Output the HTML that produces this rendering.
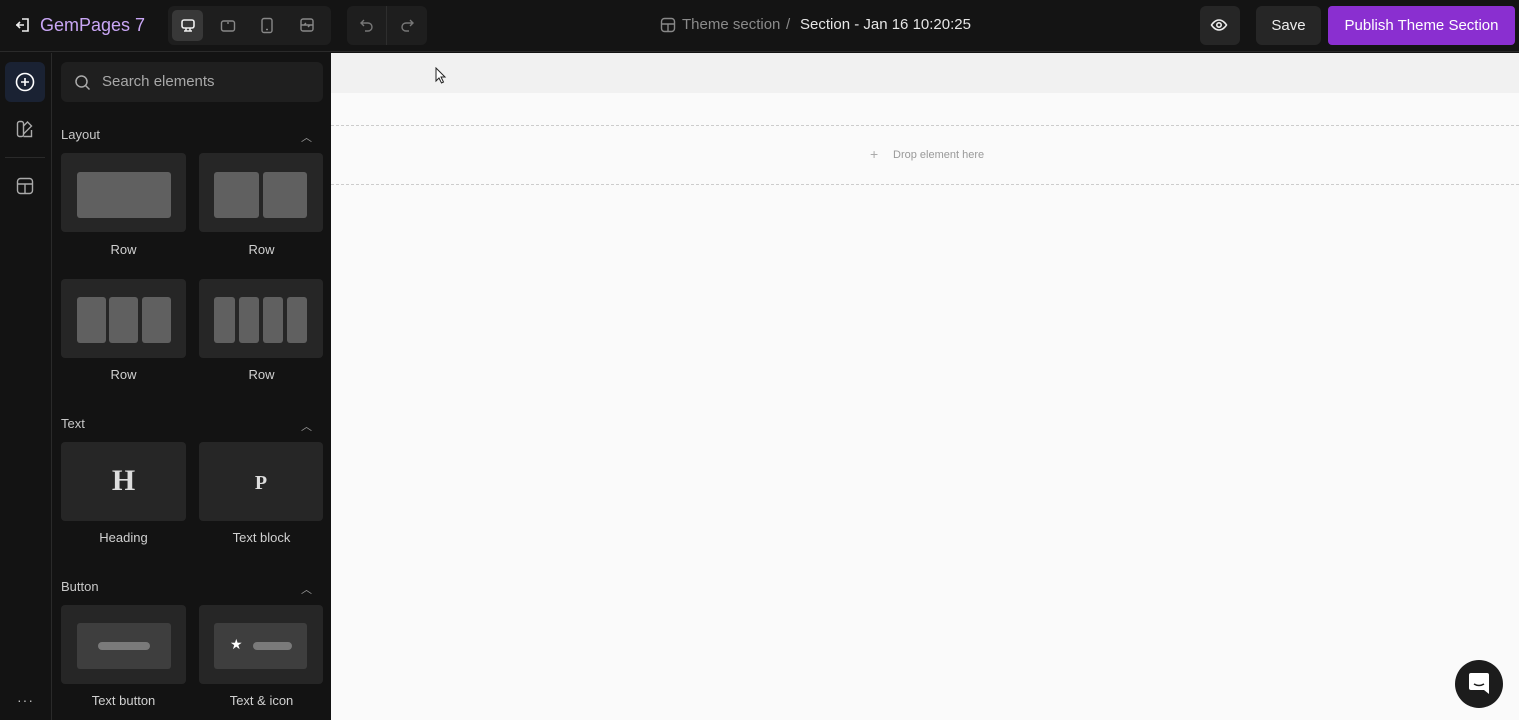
<!DOCTYPE html>
<html><head><meta charset="utf-8"><style>
*{box-sizing:border-box;margin:0;padding:0}
body{width:1519px;height:720px;overflow:hidden;background:#131313;font-family:"Liberation Sans",sans-serif;position:relative}
.a{position:absolute}
.top{left:0;top:0;width:1519px;height:52px;background:#141414;border-bottom:1px solid #2a2a2a}
.rail{left:0;top:53px;width:52px;height:667px;background:#131313;border-right:1px solid #2a2a2a}
.card{position:absolute;width:125px;height:79px;background:#262626;border-radius:4px}
.lbl{position:absolute;width:125px;text-align:center;color:#d0d0d0;font-size:13px}
.hdr{position:absolute;left:61px;color:#c8c8c8;font-size:13px}
.car{position:absolute;left:301px;color:#999;font-size:11px}
.blk{position:absolute;background:#606060;border-radius:3px}
</style></head><body>
<div class="a top"></div>
<svg class="a" style="left:14px;top:16px" width="18" height="18" viewBox="0 0 18 18" fill="none" stroke="#eee" stroke-width="1.6"><path d="M8 3h6v12H8M2 9h8M6 6l-3 3 3 3"/></svg>
<div class="a" style="left:40px;top:15px;color:#c9a6f5;font-size:18px">GemPages 7</div>
<div class="a" style="left:168px;top:6px;width:163px;height:39px;background:#1e1e1e;border-radius:6px"></div>
<div class="a" style="left:172px;top:10px;width:31px;height:31px;background:#383838;border-radius:5px"></div>
<svg class="a" style="left:180px;top:18px" width="16" height="16" viewBox="0 0 16 16" fill="none" stroke="#eee" stroke-width="1.6"><rect x="2" y="2" width="12" height="8" rx="2"/><path d="M4 13h8M6 10v3M10 10v3"/></svg>
<svg class="a" style="left:220px;top:18px" width="16" height="16" viewBox="0 0 16 16" fill="none" stroke="#888" stroke-width="1.4"><rect x="1.5" y="3" width="13" height="10" rx="2"/><path d="M7 5h2"/></svg>
<svg class="a" style="left:260px;top:17px" width="14" height="17" viewBox="0 0 14 17" fill="none" stroke="#888" stroke-width="1.4"><rect x="2" y="1.5" width="10" height="14" rx="2"/><path d="M6 12.5h2"/></svg>
<svg class="a" style="left:299px;top:17px" width="16" height="16" viewBox="0 0 16 16" fill="none" stroke="#888" stroke-width="1.4"><rect x="2" y="2" width="12" height="12" rx="2"/><path d="M2 8h12M5 8l2-2M11 8l-2 2"/></svg>
<div class="a" style="left:347px;top:6px;width:80px;height:39px;background:#1e1e1e;border-radius:6px;border-right:0"></div>
<div class="a" style="left:386px;top:6px;width:1px;height:39px;background:#2e2e2e"></div>
<svg class="a" style="left:359px;top:17px" width="16" height="16" viewBox="0 0 16 16" fill="none" stroke="#777" stroke-width="1.4"><path d="M5 3L2 6l3 3M2 6h7a4 4 0 010 8H6"/></svg>
<svg class="a" style="left:399px;top:17px" width="16" height="16" viewBox="0 0 16 16" fill="none" stroke="#777" stroke-width="1.4"><path d="M11 3l3 3-3 3M14 6H7a4 4 0 000 8h3"/></svg>
<svg class="a" style="left:660px;top:17px" width="16" height="16" viewBox="0 0 16 16" fill="none" stroke="#888" stroke-width="1.4"><rect x="1.5" y="1.5" width="13" height="13" rx="3"/><path d="M1.5 7h13M8 7v7.5"/></svg>
<div class="a" style="left:682px;top:16px;color:#8a8a8a;font-size:15px">Theme section</div>
<div class="a" style="left:786px;top:16px;color:#8a8a8a;font-size:15px">/</div>
<div class="a" style="left:800px;top:16px;color:#e6e6e6;font-size:15px">Section - Jan 16 10:20:25</div>
<div class="a" style="left:1200px;top:6px;width:40px;height:39px;background:#262626;border-radius:6px"></div>
<svg class="a" style="left:1210px;top:17px" width="18" height="16" viewBox="0 0 18 16" fill="none" stroke="#eee" stroke-width="1.6"><path d="M1.5 8S4.5 3 9 3s7.5 5 7.5 5-3 5-7.5 5S1.5 8 1.5 8z"/><circle cx="9" cy="8" r="2.2"/></svg>
<div class="a" style="left:1256px;top:6px;width:65px;height:39px;background:#262626;border-radius:6px;color:#eee;font-size:15px;line-height:39px;text-align:center">Save</div>
<div class="a" style="left:1328px;top:6px;width:187px;height:39px;background:#8a2fd0;border-radius:4px;color:#fff;font-size:15px;line-height:39px;text-align:center">Publish Theme Section</div>
<div class="a rail"></div>
<div class="a" style="left:5px;top:62px;width:40px;height:40px;background:#1a2233;border-radius:6px"></div>
<svg class="a" style="left:15px;top:72px" width="20" height="20" viewBox="0 0 20 20" fill="none" stroke="#fff" stroke-width="1.6"><circle cx="10" cy="10" r="8.5"/><path d="M10 6v8M6 10h8"/></svg>
<svg class="a" style="left:16px;top:120px" width="18" height="18" viewBox="0 0 18 18" fill="none" stroke="#aaa" stroke-width="1.4"><rect x="1.5" y="1.5" width="6" height="15" rx="2"/><path d="M7.5 6l4-4 4 4-8 8M7.5 16.5h8V10"/></svg>
<div class="a" style="left:5px;top:157px;width:40px;height:1px;background:#2a2a2a"></div>
<svg class="a" style="left:16px;top:177px" width="18" height="18" viewBox="0 0 18 18" fill="none" stroke="#aaa" stroke-width="1.4"><rect x="1.5" y="1.5" width="15" height="15" rx="3"/><path d="M1.5 7h15M9 7v9.5"/></svg>
<div class="a" style="left:17px;top:692px;color:#bbb;font-size:14px;letter-spacing:1px">···</div>
<div class="a" style="left:61px;top:62px;width:262px;height:40px;background:#1f1f1f;border-radius:6px"></div>
<svg class="a" style="left:74px;top:74px" width="17" height="17" viewBox="0 0 17 17" fill="none" stroke="#aaa" stroke-width="1.5"><circle cx="7.5" cy="7.5" r="5.5"/><path d="M11.5 11.5l4 4"/></svg>
<div class="a" style="left:102px;top:73px;color:#a8a8a8;font-size:15px">Search elements</div>
<div class="hdr" style="top:127px">Layout</div><div class="car" style="top:129px">︿</div>
<div class="card" style="left:61px;top:153px"></div><div class="card" style="left:199px;top:153px;width:124px"></div>
<div class="blk" style="left:77px;top:172px;width:94px;height:46px"></div>
<div class="blk" style="left:214px;top:172px;width:45px;height:46px"></div><div class="blk" style="left:263px;top:172px;width:44px;height:46px"></div>
<div class="lbl" style="left:61px;top:242px">Row</div><div class="lbl" style="left:199px;top:242px">Row</div>
<div class="card" style="left:61px;top:279px"></div><div class="card" style="left:199px;top:279px;width:124px"></div>
<div class="blk" style="left:77px;top:297px;width:29px;height:46px"></div><div class="blk" style="left:109px;top:297px;width:29px;height:46px"></div><div class="blk" style="left:142px;top:297px;width:29px;height:46px"></div>
<div class="blk" style="left:214px;top:297px;width:21px;height:46px"></div><div class="blk" style="left:239px;top:297px;width:20px;height:46px"></div><div class="blk" style="left:263px;top:297px;width:20px;height:46px"></div><div class="blk" style="left:287px;top:297px;width:20px;height:46px"></div>
<div class="lbl" style="left:61px;top:367px">Row</div><div class="lbl" style="left:199px;top:367px">Row</div>
<div class="hdr" style="top:416px">Text</div><div class="car" style="top:418px">︿</div>
<div class="card" style="left:61px;top:442px"></div><div class="card" style="left:199px;top:442px;width:124px"></div>
<div class="a" style="left:61px;top:464px;width:125px;text-align:center;color:#ddd;font:bold 30px 'Liberation Serif',serif">H</div>
<div class="a" style="left:199px;top:472px;width:124px;text-align:center;color:#ddd;font:bold 20px 'Liberation Serif',serif">P</div>
<div class="lbl" style="left:61px;top:530px">Heading</div><div class="lbl" style="left:199px;top:530px">Text block</div>
<div class="hdr" style="top:579px">Button</div><div class="car" style="top:581px">︿</div>
<div class="card" style="left:61px;top:605px"></div><div class="card" style="left:199px;top:605px;width:124px"></div>
<div class="a" style="left:77px;top:623px;width:94px;height:46px;background:#3e3e3e;border-radius:3px"></div>
<div class="a" style="left:98px;top:642px;width:52px;height:8px;background:#7a7a7a;border-radius:4px"></div>
<div class="a" style="left:214px;top:623px;width:93px;height:46px;background:#3e3e3e;border-radius:3px"></div>
<div class="a" style="left:230px;top:636px;color:#fff;font-size:14px">★</div>
<div class="a" style="left:253px;top:642px;width:39px;height:8px;background:#7a7a7a;border-radius:4px"></div>
<div class="lbl" style="left:61px;top:693px">Text button</div><div class="lbl" style="left:199px;top:693px">Text &amp; icon</div>
<div class="a" style="left:331px;top:53px;width:1188px;height:667px;background:#fafafa"></div>
<div class="a" style="left:331px;top:53px;width:1188px;height:40px;background:#f1f1f1"></div>
<div class="a" style="left:331px;top:125px;width:1188px;height:60px;border-top:1px dashed #ccc;border-bottom:1px dashed #ccc"></div>
<div class="a" style="left:870px;top:146px;color:#aaa;font-size:14px">+</div>
<div class="a" style="left:893px;top:149px;color:#999;font-size:11px">Drop element here</div>
<svg class="a" style="left:435px;top:67px" width="12" height="18" viewBox="0 0 12 18"><path d="M1 1v13l3-3 2.5 5 2-1-2.5-5H10z" fill="#fff" stroke="#222" stroke-width="1"/></svg>
<div class="a" style="left:1455px;top:660px;width:48px;height:48px;border-radius:50%;background:#1c1c1c"></div>
<svg class="a" style="left:1468px;top:672px" width="22" height="24" viewBox="0 0 22 24"><path d="M3 1h16a2 2 0 012 2v19l-5-4H3a2 2 0 01-2-2V3a2 2 0 012-2z" fill="#fff"/><path d="M6 12q5 3 10 0" stroke="#1c1c1c" stroke-width="1.6" fill="none"/></svg>
</body></html>
